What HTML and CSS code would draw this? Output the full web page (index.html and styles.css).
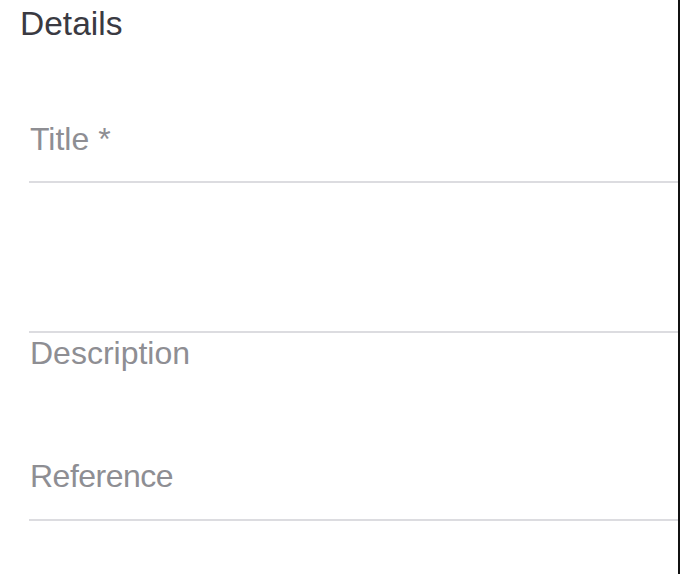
FILE: index.html
```html
<!DOCTYPE html>
<html>
<head>
<meta charset="utf-8">
<link rel="stylesheet" href="styles.css">
</head>
<body>
<div class="page">
  <h1 class="heading">Details</h1>
  <div class="field field-title">
    <div class="label">Title *</div>
  </div>
  <div class="field field-blank"></div>
  <div class="field field-description">
    <div class="label">Description</div>
  </div>
  <div class="field field-reference">
    <div class="label label-tight">Reference</div>
  </div>
</div>
</body>
</html>
```

FILE: styles.css
```css
html, body {
  margin: 0;
  padding: 0;
  background: #ffffff;
}
.page {
  width: 680px;
  height: 574px;
  box-sizing: border-box;
  border-right: 2px solid #111111;
  font-family: "Liberation Sans", Arial, sans-serif;
  overflow: hidden;
}
.heading {
  margin: 4px 0 0 0;
  padding-left: 20px;
  font-size: 33.5px;
  line-height: 40px;
  font-weight: normal;
  color: #3a3a42;
}
.field {
  margin-left: 29px;
}
.label {
  font-size: 32px;
  line-height: 40px;
  color: #8e8e93;
  padding-left: 1px;
}
.label-tight {
  letter-spacing: -0.5px;
}
.field-title {
  padding-top: 75px;
  padding-bottom: 22px;
  border-bottom: 2px solid #dcdce0;
}
.field-blank {
  height: 148px;
  border-bottom: 2px solid #dcdce0;
}
.field-reference {
  margin-top: 83px;
  padding-bottom: 23px;
  border-bottom: 2px solid #dcdce0;
}
```
